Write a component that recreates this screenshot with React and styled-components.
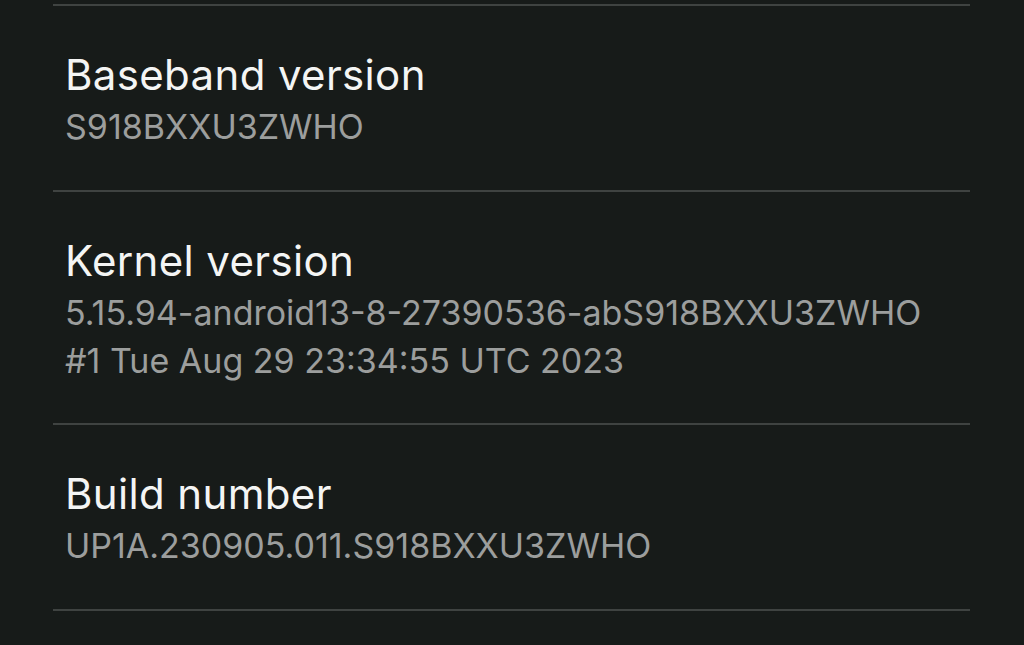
import React from 'react';
import styled, { createGlobalStyle } from 'styled-components';

const GlobalStyle = createGlobalStyle`
  html, body {
    margin: 0;
    padding: 0;
    background: #171b19;
  }
  body {
    font-family: Inter, Roboto, "Liberation Sans", sans-serif;
    -webkit-font-smoothing: antialiased;
  }
`;

const Screen = styled.div`
  width: 1024px;
  height: 645px;
  overflow: hidden;
  background: #171b19;
  padding: 4px 54px 0 53px;
  box-sizing: border-box;
`;

const List = styled.div`
  display: flex;
  flex-direction: column;
  border-bottom: 2px solid #3f4341;
`;

const Item = styled.div`
  display: flex;
  flex-direction: column;
  border-top: 2px solid #3f4341;
  padding: 45px 12px ${(p) => (p.$multi ? 38 : 39)}px;
`;

const Title = styled.div`
  font-size: 42px;
  line-height: 48px;
  letter-spacing: 0.35px;
  color: #f4f5f4;
`;

const Value = styled.div`
  margin-top: 4px;
  font-size: 34px;
  line-height: 48px;
  color: #9c9e9d;
`;

const rows = [
  { title: 'Baseband version', lines: ['S918BXXU3ZWHO'] },
  {
    title: 'Kernel version',
    lines: ['5.15.94-android13-8-27390536-abS918BXXU3ZWHO', '#1 Tue Aug 29 23:34:55 UTC 2023'],
  },
  { title: 'Build number', lines: ['UP1A.230905.011.S918BXXU3ZWHO'] },
];

export default function App() {
  return (
    <>
      <GlobalStyle />
      <Screen>
        <List>
          {rows.map((r) => (
            <Item key={r.title} $multi={r.lines.length > 1}>
              <Title>{r.title}</Title>
              <Value>
                {r.lines.map((l, i) => (
                  <div key={i}>{l}</div>
                ))}
              </Value>
            </Item>
          ))}
        </List>
      </Screen>
    </>
  );
}
